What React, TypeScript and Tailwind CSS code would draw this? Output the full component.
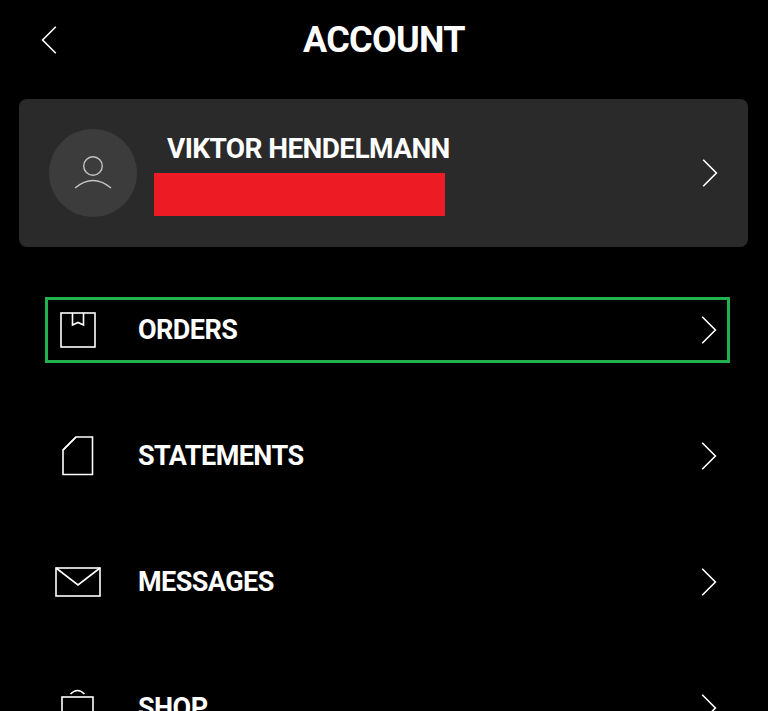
const Chevron = ({ flip = false }: { flip?: boolean }) => (
  <svg width="16" height="28" viewBox="0 0 16 28" fill="none" stroke="currentColor" strokeWidth="1.6" className={flip ? "rotate-180" : ""}>
    <path d="M1.2 0.8 L14.4 14 L1.2 27.2" />
  </svg>
);

const OrdersIcon = () => (
  <svg width="36" height="36" viewBox="0 0 36 36" fill="none" stroke="white" strokeWidth="1.6">
    <rect x="1" y="1" width="34" height="34" />
    <path d="M12.5 1 V13 L18 10.5 L23.5 13 V1" />
  </svg>
);
const StatementsIcon = () => (
  <svg width="32" height="40" viewBox="0 0 32 40" fill="none" stroke="white" strokeWidth="1.6">
    <path d="M14 1 H30.5 V38.5 H1 V14 Z" />
    <path d="M14 1 L1 14" />
  </svg>
);
const MessagesIcon = () => (
  <svg width="46" height="30" viewBox="0 0 46 30" fill="none" stroke="white" strokeWidth="1.6">
    <rect x="1" y="1" width="44" height="28" />
    <path d="M1 1 L23 18 L45 1" />
  </svg>
);
const ShopIcon = () => (
  <svg width="34" height="40" viewBox="0 0 34 40" fill="none" stroke="white" strokeWidth="1.6">
    <rect x="1" y="9" width="31" height="30" />
    <path d="M9.5 6 Q16.5 -1 23.5 6" />
  </svg>
);

const Row = ({ icon, label, outlined }: { icon: React.ReactNode; label: string; outlined?: boolean }) => (
  <div className={`flex h-[66px] items-center pr-[10px] text-white border-[3px] ${outlined ? "border-[#22b14c]" : "border-transparent"}`}>
    <div className="flex w-[60px] shrink-0 justify-center">{icon}</div>
    <span className="ml-[30px] flex-1 text-[27px] font-bold leading-none tracking-[-0.55px]">{label}</span>
    <Chevron />
  </div>
);

export default function App() {
  return (
    <div className="h-[711px] w-[768px] overflow-hidden bg-black font-['Roboto',sans-serif] text-white">
      <header className="relative flex h-[80px] items-center justify-center">
        <div className="absolute left-[41px] top-[26px]"><Chevron flip /></div>
        <h1 className="text-[36px] font-bold leading-none tracking-[-0.7px]">ACCOUNT</h1>
      </header>
      <section className="ml-[19px] mr-[20px] mt-[19px] flex h-[148px] items-center rounded-[8px] bg-[#2a2a2a] pl-[30px] pr-[30px]">
        <div className="flex h-[88px] w-[88px] shrink-0 items-center justify-center rounded-full bg-[#3c3c3c]">
          <svg width="38" height="34" viewBox="0 0 38 34" fill="none" stroke="#c4c4c4" strokeWidth="1.4">
            <circle cx="19" cy="10" r="9.3" />
            <path d="M1 32 Q19 17 37 32" />
          </svg>
        </div>
        <div className="ml-[17px] flex flex-1 flex-col">
          <span className="ml-[13px] mt-[2px] text-[28px] font-bold leading-[32px] tracking-[-0.6px]">VIKTOR HENDELMANN</span>
          <div className="mt-[8px] h-[43px] w-[291px] bg-[#ed1c24]" />
        </div>
        <Chevron />
      </section>
      <div className="ml-[45px] mr-[38px] mt-[50px] flex flex-col gap-[60px]">
        <Row icon={<OrdersIcon />} label="ORDERS" outlined />
        <Row icon={<StatementsIcon />} label="STATEMENTS" />
        <Row icon={<MessagesIcon />} label="MESSAGES" />
        <Row icon={<ShopIcon />} label="SHOP" />
      </div>
    </div>
  );
}
